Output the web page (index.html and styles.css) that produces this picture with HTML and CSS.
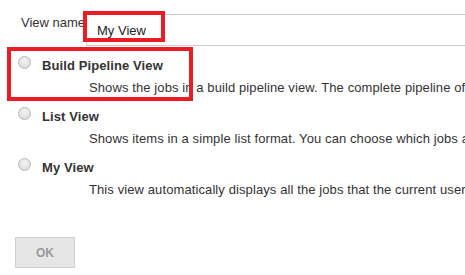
FILE: index.html
```html
<!DOCTYPE html>
<html>
<head>
<meta charset="utf-8">
<link rel="stylesheet" href="styles.css">
</head>
<body>
<div class="page">
  <div class="name-row">
    <label class="name-label" for="vn">View name</label>
    <div class="input-wrap">
      <input id="vn" class="name-input" type="text" value="My View">
      <div class="mark mark-input"></div>
    </div>
  </div>

  <div class="options">
    <div class="opt">
      <div class="opt-head">
        <span class="radio"></span>
        <span class="opt-title">Build Pipeline View</span>
      </div>
      <div class="opt-desc">Shows the jobs in a build pipeline view. The complete pipeline of jobs that are in the upstream and downstream chain is shown.</div>
      <div class="mark mark-opt"></div>
    </div>
    <div class="opt">
      <div class="opt-head">
        <span class="radio"></span>
        <span class="opt-title">List View</span>
      </div>
      <div class="opt-desc">Shows items in a simple list format. You can choose which jobs are to be displayed in which view.</div>
    </div>
    <div class="opt">
      <div class="opt-head">
        <span class="radio"></span>
        <span class="opt-title">My View</span>
      </div>
      <div class="opt-desc">This view automatically displays all the jobs that the current user has an access to.</div>
    </div>
  </div>

  <div class="actions">
    <button class="ok-btn" type="button">OK</button>
  </div>
</div>
</body>
</html>
```

FILE: styles.css
```css
html, body {
  margin: 0;
  padding: 0;
  background: #ffffff;
  overflow: hidden;
}
body {
  width: 465px;
  height: 275px;
  font-family: "Liberation Sans", Arial, sans-serif;
  font-size: 13px;
  line-height: 15px;
  color: #333333;
}
.page {
  display: flex;
  flex-direction: column;
}
.name-row {
  display: flex;
  align-items: flex-start;
  padding: 14px 0 0 21px;
}
.name-label {
  margin-top: 1px;
  width: 65px;
  flex: none;
  white-space: nowrap;
}
.input-wrap {
  position: relative;
  flex: none;
}
.name-input {
  display: block;
  box-sizing: border-box;
  width: 420px;
  height: 32px;
  margin: 0;
  padding: 0 0 0 10px;
  border: 1px solid #cccccc;
  font-family: "Liberation Sans", Arial, sans-serif;
  font-size: 13px;
  color: #222222;
  background: #ffffff;
  outline: none;
}
.mark {
  position: absolute;
  box-sizing: border-box;
  border: 4px solid #ec1c24;
  pointer-events: none;
}
.mark-input {
  left: -3px;
  top: -3px;
  width: 82px;
  height: 31px;
}
.options {
  display: flex;
  flex-direction: column;
  gap: 14px;
  padding-top: 12px;
}
.opt {
  position: relative;
  display: flex;
  flex-direction: column;
  gap: 7px;
}
.mark-opt {
  left: 7px;
  top: -11px;
  width: 186px;
  height: 54px;
}
.opt-head {
  display: flex;
  align-items: flex-start;
  padding-left: 18px;
  gap: 11px;
}
.radio {
  flex: none;
  width: 13px;
  height: 13px;
  margin-top: -2px;
  box-sizing: border-box;
  border-radius: 50%;
  border: 1px solid #b9b9b9;
  background: radial-gradient(circle at 50% 35%, #f2f2f2 0%, #e2e2e2 60%, #d4d4d4 100%);
}
.opt-title {
  font-weight: bold;
  white-space: nowrap;
  letter-spacing: 0.1px;
}
.opt-desc {
  padding-left: 89px;
  white-space: nowrap;
  overflow: hidden;
  letter-spacing: 0.1px;
}
.actions {
  padding: 40px 0 0 15px;
}
.ok-btn {
  display: block;
  box-sizing: border-box;
  width: 60px;
  height: 31px;
  margin: 0;
  padding: 0;
  border: 1px solid #d0d0d0;
  background: #e6e6e6;
  font-family: "Liberation Sans", Arial, sans-serif;
  font-size: 12px;
  font-weight: bold;
  color: #9a9a9a;
}
```
